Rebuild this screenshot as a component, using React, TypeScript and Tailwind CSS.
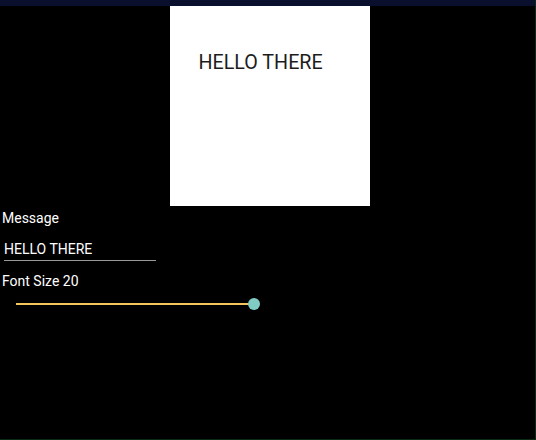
export default function App() {
  return (
    <div
      className="w-[536px] h-[440px] bg-black flex flex-col border-r border-b border-[#0b2a12] overflow-hidden"
      style={{ fontFamily: "Roboto, 'Noto Sans', sans-serif" }}
    >
      <div className="h-[6px] bg-[#0b0f2e] shrink-0" />
      <div className="flex justify-center shrink-0">
        <div className="w-[200px] h-[200px] bg-white ml-[4px] pl-[29px] pt-[43px] text-[19.7px] leading-[28px] text-[#1c1c1c]">
          HELLO THERE
        </div>
      </div>
      <div className="flex flex-col pl-[2px]">
        <label className="text-[14px] leading-[20px] text-white pt-[2px]">Message</label>
        <div className="w-[152px] ml-[2px] mt-[11px] border-b border-[#9a9a9a] pb-[1px] text-[14px] leading-[20px] text-white">
          HELLO THERE
        </div>
        <span className="text-[14px] leading-[20px] text-white mt-[10px]">Font Size 20</span>
        <div className="relative w-[244px] h-[12px] ml-[14px] mt-[7px] flex items-center">
          <div className="h-[2px] w-[238px] bg-[#f3c35c]" />
          <div className="absolute right-0 top-0 w-[12px] h-[12px] rounded-full bg-[#80cbc4]" />
        </div>
      </div>
    </div>
  );
}
